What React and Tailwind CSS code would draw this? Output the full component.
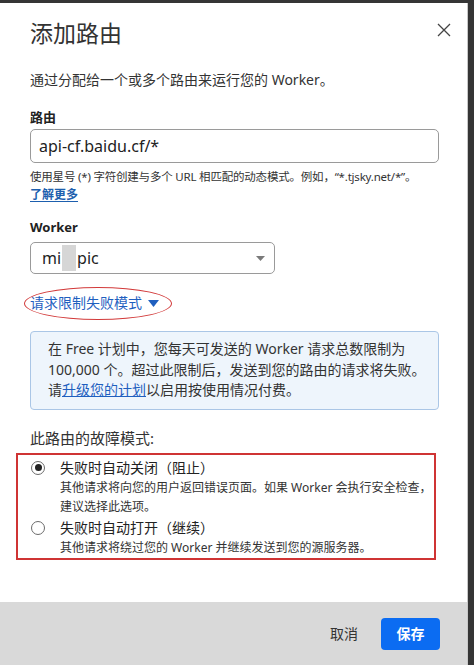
import React, { useState } from "react";

const FONT = {
  fontFamily: '"Segoe UI", "Noto Sans", "Noto Sans CJK SC", sans-serif',
};

function Radio({ checked }) {
  return (
    <span className="mt-[3px] flex h-[14px] w-[14px] shrink-0 items-center justify-center rounded-full border border-[#6b6b6b] bg-white">
      {checked && <span className="h-[7px] w-[7px] rounded-full bg-[#222]" />}
    </span>
  );
}

export default function App() {
  const [mode, setMode] = useState("close");

  return (
    <div className="min-h-screen bg-[#353535] pt-[3px] pr-[6px]" style={FONT}>
      <div className="flex h-[662px] flex-col border-r border-[#c8c8c8] bg-white">
        {/* Body */}
        <div className="flex-1 px-[30px] pt-[14px] text-[#333]">
          <div className="flex items-start justify-between">
            <h2 className="text-[23px] leading-[32px] font-normal text-[#333]">
              添加路由
            </h2>
            <button className="mt-[6px] -mr-[14px] text-[#444]">
              <svg width="14" height="14" viewBox="0 0 14 14">
                <path
                  d="M1 1L13 13M13 1L1 13"
                  stroke="currentColor"
                  strokeWidth="1.3"
                  fill="none"
                />
              </svg>
            </button>
          </div>

          <p className="mt-[21px] text-[14px] leading-[20px]">
            通过分配给一个或多个路由来运行您的 Worker。
          </p>

          {/* Route */}
          <label className="mt-[18px] block text-[13px] leading-[18px] font-bold text-[#222]">
            路由
          </label>
          <div className="mt-[3px] flex h-[34px] w-[409px] items-center rounded-[5px] border border-[#9a9a9a] px-[8px] text-[16px] text-[#222]">
            api-cf.baidu.cf/*
          </div>
          <p className="mt-[5px] text-[11.5px] leading-[18px] tracking-[-0.2px] whitespace-nowrap text-[#333]">
            使用星号 (*) 字符创建与多个 URL 相匹配的动态模式。例如，“*.tjsky.net/*”。
          </p>
          <a className="block w-fit text-[12px] leading-[18px] font-semibold text-[#1d5fae] underline underline-offset-2">
            了解更多
          </a>

          {/* Worker */}
          <label className="mt-[14px] block text-[13px] leading-[18px] font-bold text-[#222]">
            Worker
          </label>
          <div className="mt-[6px] flex h-[32px] w-[245px] items-center justify-between rounded-[5px] border border-[#9a9a9a] pr-[9px] pl-[11px] text-[16px] text-[#222]">
            <span className="flex items-center">
              mi
              <span className="mx-[1px] inline-block h-[26px] w-[14px] bg-[#d6d6d6]" />
              pic
            </span>
            <svg width="9" height="5" viewBox="0 0 9 5">
              <path d="M0 0H9L4.5 5Z" fill="#7a7a7a" />
            </svg>
          </div>

          {/* Rate limit link with annotation */}
          <div className="relative mt-[19px] w-fit">
            <a className="flex items-center gap-[6px] text-[14px] leading-[20px] text-[#1f5fbf]">
              请求限制失败模式
              <svg width="11" height="7" viewBox="0 0 11 7">
                <path d="M0 0H11L5.5 7Z" fill="#1f5fbf" />
              </svg>
            </a>
            <span className="pointer-events-none absolute -top-[6px] -left-[6px] h-[33px] w-[148px] rounded-[50%] border-[1.5px] border-[#d23a3a]" />
          </div>

          {/* Info box */}
          <div className="mt-[18px] w-[409px] rounded-[4px] border border-[#aac6e6] bg-[#eef5fc] pt-[7px] pr-[12px] pb-[8px] pl-[17px] text-[14px] leading-[20.5px] text-[#333]">
            在 Free 计划中，您每天可发送的 Worker 请求总数限制为 100,000 个。超过此限制后，发送到您的路由的请求将失败。请
            <a className="text-[#1f5fbf] underline underline-offset-1">
              升级您的计划
            </a>
            以启用按使用情况付费。
          </div>

          {/* Failure mode */}
          <p className="mt-[17px] text-[15px] leading-[22px] text-[#333]">
            此路由的故障模式:
          </p>
          <div className="mt-[4px] -ml-[14px] w-[420px] border-2 border-[#cf3434] pt-[3px] pb-[1px] pl-[13px]">
            <div
              className="flex cursor-pointer gap-[15px]"
              onClick={() => setMode("close")}
            >
              <Radio checked={mode === "close"} />
              <div>
                <div className="text-[14px] leading-[20px] text-[#222]">
                  失败时自动关闭（阻止）
                </div>
                <div className="text-[12px] leading-[19px] text-[#333]">
                  其他请求将向您的用户返回错误页面。如果 Worker 会执行安全检查，建议选择此选项。
                </div>
              </div>
            </div>
            <div
              className="mt-[2px] flex cursor-pointer gap-[15px]"
              onClick={() => setMode("open")}
            >
              <Radio checked={mode === "open"} />
              <div>
                <div className="text-[14px] leading-[20px] text-[#222]">
                  失败时自动打开（继续）
                </div>
                <div className="text-[12px] leading-[19px] text-[#333]">
                  其他请求将绕过您的 Worker 并继续发送到您的源服务器。
                </div>
              </div>
            </div>
          </div>
        </div>

        {/* Footer */}
        <div className="flex h-[63px] items-center justify-end gap-[23px] bg-[#d9d9d9] pr-[27px]">
          <button className="text-[14px] text-[#333]">取消</button>
          <button className="h-[32px] w-[59px] rounded-[4px] bg-[#0b6cf2] text-[14px] font-bold text-white">
            保存
          </button>
        </div>
      </div>
    </div>
  );
}
